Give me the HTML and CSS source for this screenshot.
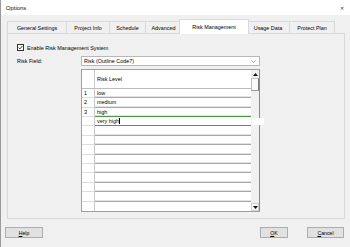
FILE: index.html
```html
<!DOCTYPE html>
<html>
<head>
<meta charset="utf-8">
<link rel="stylesheet" href="styles.css">
</head>
<body>
<div class="window">
  <div class="titlebar">
    <span class="title">Options</span>
    <span class="close">✕</span>
  </div>
  <div class="body">
    <div class="tabs">
      <div class="tab w-gs">General Settings</div>
      <div class="tab w-pi">Project Info</div>
      <div class="tab w-sc">Schedule</div>
      <div class="tab w-ad">Advanced</div>
      <div class="tab tab-sel w-rm">Risk Management</div>
      <div class="tab w-ud">Usage Data</div>
      <div class="tab w-pp">Protect Plan</div>
    </div>
    <div class="panel">
      <div class="check-row">
        <span class="checkbox">
          <svg width="5" height="5" viewBox="0 0 5 5"><path d="M0.6 2.6 L1.9 3.9 L4.4 1" fill="none" stroke="#222" stroke-width="0.9"/></svg>
        </span>
        <span>Enable Risk Management System</span>
      </div>
      <div class="field-row">
        <span class="label">Risk Field:</span>
        <div class="combo">
          <span>Risk (Outline Code7)</span>
          <svg class="chev" width="5" height="3" viewBox="0 0 5 3"><path d="M0.3 0.3 L2.5 2.5 L4.7 0.3" fill="none" stroke="#888" stroke-width="0.7"/></svg>
        </div>
      </div>
      <div class="grid-row">
        <div class="grid">
          <div class="grid-main">
            <div class="row head"><div class="num"></div><div class="cell">Risk Level</div></div>
            <div class="row"><div class="num">1</div><div class="cell">low</div></div>
            <div class="row"><div class="num">2</div><div class="cell">medium</div></div>
            <div class="row"><div class="num">3</div><div class="cell">high</div></div>
            <div class="row edit"><div class="num"></div><div class="cell">very high<span class="caret"></span></div></div>
            <div class="row"><div class="num"></div><div class="cell"></div></div>
            <div class="row"><div class="num"></div><div class="cell"></div></div>
            <div class="row"><div class="num"></div><div class="cell"></div></div>
            <div class="row"><div class="num"></div><div class="cell"></div></div>
            <div class="row"><div class="num"></div><div class="cell"></div></div>
            <div class="row"><div class="num"></div><div class="cell"></div></div>
            <div class="row"><div class="num"></div><div class="cell"></div></div>
            <div class="row"><div class="num"></div><div class="cell"></div></div>
            <div class="row last"><div class="num"></div><div class="cell"></div></div>
          </div>
          <div class="vscroll">
            <div class="sbtn"><svg width="5" height="3" viewBox="0 0 5 3"><path d="M0 3 L2.5 0 L5 3 Z" fill="#111"/></svg></div>
            <div class="thumb"></div>
            <div class="track"></div>
            <div class="sbtn sbtn-down"><svg width="5" height="3" viewBox="0 0 5 3"><path d="M0 0 L2.5 3 L5 0 Z" fill="#111"/></svg></div>
          </div>
          <div class="edit-spill"></div>
        </div>
      </div>
    </div>
    <div class="buttons">
      <div class="btn w-help"><u>H</u>elp</div>
      <div class="spacer"></div>
      <div class="btn w-ok"><u>O</u>K</div>
      <div class="btn w-cancel"><u>C</u>ancel</div>
    </div>
  </div>
</div>
</body>
</html>
```

FILE: styles.css
```css
* { box-sizing: border-box; }
html, body { margin: 0; padding: 0; }
body {
  width: 350px;
  height: 247px;
  overflow: hidden;
  background: #f0f0f0;
  font-family: "Liberation Sans", Arial, sans-serif;
  font-size: 5.4px;
  color: #000;
}
.window {
  width: 350px;
  height: 247px;
  border-left: 1px solid #9a9a9a;
  display: flex;
  flex-direction: column;
}
.titlebar {
  height: 15px;
  background: #ffffff;
  display: flex;
  align-items: center;
  padding: 0 5px 0 5px;
}
.title { font-size: 5.9px; flex: 1; color: #111; }
.close { font-size: 5px; color: #333; margin-right: 1px; }
.body {
  flex: 1;
  padding: 5px 6px 0 6px;
  display: flex;
  flex-direction: column;
}
.tabs {
  display: flex;
  align-items: flex-end;
  height: 13px;
  position: relative;
  z-index: 1;
}
.tab {
  height: 12px;
  border: 1px solid #d9d9d9;
  border-bottom: none;
  margin-right: -1px;
  background: #f0f0f0;
  display: flex;
  align-items: center;
  justify-content: center;
  padding-top: 1px;
}
.tab-sel {
  height: 15px;
  margin-bottom: -1px;
  margin-left: -2px;
  margin-right: -3px;
  background: #ffffff;
  padding-bottom: 1px;
  position: relative;
}
.w-gs { width: 60px; }
.w-pi { width: 44px; }
.w-sc { width: 37px; }
.w-ad { width: 37px; }
.w-rm { width: 70px; }
.w-ud { width: 44px; }
.w-pp { width: 46px; }
.panel {
  width: 338px;
  height: 186px;
  border: 1px solid #d9d9d9;
  background: #f0f0f0;
  display: flex;
  flex-direction: column;
  padding: 10px 0 0 9px;
}
.check-row {
  display: flex;
  align-items: center;
  gap: 3px;
  height: 7px;
}
.checkbox {
  width: 7px;
  height: 7px;
  border: 1px solid #333;
  background: #fff;
  display: flex;
  align-items: center;
  justify-content: center;
}
.checkbox svg { display: block; }
.field-row {
  display: flex;
  align-items: center;
  margin-top: 5px;
  height: 10px;
}
.label { width: 64px; }
.combo {
  width: 179px;
  height: 10px;
  border: 1px solid #b8b8b8;
  background: #fff;
  display: flex;
  align-items: center;
  justify-content: space-between;
  padding: 0 3px 0 2px;
}
.chev { display: block; }
.grid-row {
  display: flex;
  margin-top: 3px;
  padding-left: 64px;
}
.grid {
  width: 179px;
  height: 143px;
  border: 1px solid #a0a0a0;
  border-right-color: #8a8a8a;
  background: #fff;
  display: flex;
  position: relative;
}
.grid-main {
  flex: 1;
  display: flex;
  flex-direction: column;
}
.row {
  display: flex;
  height: 9.5px;
}
.row.head { height: 19px; }
.num {
  width: 13px;
  border-right: 1px solid #c8c8c8;
  border-bottom: 1px solid #dcdcdc;
  padding-left: 2px;
  display: flex;
  align-items: center;
}
.cell {
  flex: 1;
  border-bottom: 1px solid #a8a8a8;
  box-shadow: inset 0 -2px 0 -1px #e2e2e2;
  padding-left: 2px;
  display: flex;
  align-items: center;
}
.row.head .num, .row.head .cell { border-bottom-color: #bcbcbc; box-shadow: none; }
.row.last .num, .row.last .cell { border-bottom: none; box-shadow: none; }
.row.edit .cell {
  border-top: 1px solid #4a9a4a;
  border-bottom: 1px solid #4a9a4a;
  box-shadow: none;
  margin-top: -1px;
  height: 10.5px;
  color: #111;
}
.caret {
  display: inline-block;
  width: 1px;
  height: 6px;
  background: #000;
  margin-left: 0.5px;
}
.vscroll {
  width: 8px;
  background: #f0f0f0;
  display: flex;
  flex-direction: column;
}
.sbtn {
  height: 8px;
  display: flex;
  align-items: center;
  justify-content: center;
  background: #f0f0f0;
}
.sbtn svg { display: block; }
.thumb {
  height: 13px;
  background: #fafafa;
  border: 1px solid #c0c0c0;
  border-right-color: #7a7a7a;
  border-bottom-color: #9a9a9a;
}
.track { flex: 1; }
.sbtn-down {
  background: #f6f6f6;
  border: 1px solid #d0d0d0;
}
.edit-spill {
  position: absolute;
  left: 170px;
  top: 48px;
  width: 12px;
  height: 7px;
  background: #fff;
}
.buttons {
  display: flex;
  align-items: center;
  margin-top: 8px;
  padding-left: 0;
  margin-left: -2px;
  gap: 19px;
}
.spacer { flex: 1; }
.btn {
  height: 11px;
  background: #e1e1e1;
  border: 1px solid #adadad;
  display: flex;
  align-items: center;
  justify-content: center;
  font-size: 5.2px;
}
.btn u { text-decoration-thickness: 0.5px; text-underline-offset: 0.8px; }
.w-help { width: 38px; }
.w-ok { width: 28px; }
.w-cancel { width: 37px; }
```
